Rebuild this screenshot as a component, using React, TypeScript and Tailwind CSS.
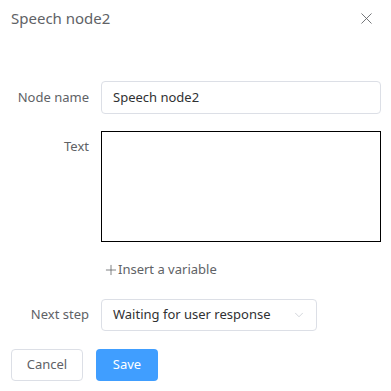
import { X, ChevronDown, Plus } from "lucide-react";

export default function App() {
  return (
    <div
      className="w-[391px] h-[391px] bg-white relative overflow-hidden text-[#606266]"
      style={{ fontFamily: '"Noto Sans", "Open Sans", sans-serif' }}
    >
      {/* Header */}
      <div className="flex items-center justify-between pl-[11px] pr-[15px] pt-[6px] h-[30px]">
        <span className="text-[15px] text-[#606266] leading-none">Speech node2</span>
        <X size={19} strokeWidth={1.1} className="text-[#606266]" />
      </div>

      {/* Form */}
      <div className="pl-[11px] pr-[10px] mt-[51px]">
        <div className="flex items-center h-[33px]">
          <label className="w-[90px] pr-[12px] text-right text-[13px]">Node name</label>
          <div className="flex-1 h-[33px] border border-[#dcdfe6] rounded-[4px] flex items-center px-[11px] text-[13px] text-[#303133]">
            Speech node2
          </div>
        </div>

        <div className="flex mt-[17px]">
          <label className="w-[90px] pr-[12px] text-right text-[13px] pt-[6px]">Text</label>
          <div className="flex-1 h-[111px] border border-black" />
        </div>

        <div className="flex items-center ml-[90px] mt-[17px] h-[22px] text-[13px] text-[#606266]">
          <Plus size={16} strokeWidth={1.2} className="text-[#606266] ml-[2px] -mr-[1px]" />
          <span>Insert a variable</span>
        </div>

        <div className="flex items-center mt-[18px] h-[32px]">
          <label className="w-[90px] pr-[12px] text-right text-[13px]">Next step</label>
          <div className="w-[216px] h-[32px] border border-[#dcdfe6] rounded-[4px] flex items-center justify-between pl-[11px] pr-[10px] text-[13px] text-[#303133]">
            <span>Waiting for user response</span>
            <ChevronDown size={14} strokeWidth={1.2} className="text-[#c0c4cc]" />
          </div>
        </div>

        <div className="flex items-center gap-[13px] mt-[18px]">
          <button className="w-[72px] h-[32px] border border-[#dcdfe6] rounded-[4px] text-[13px] text-[#606266] bg-white">
            Cancel
          </button>
          <button className="w-[62px] h-[32px] rounded-[4px] text-[13px] text-white bg-[#409eff]">
            Save
          </button>
        </div>
      </div>
    </div>
  );
}
